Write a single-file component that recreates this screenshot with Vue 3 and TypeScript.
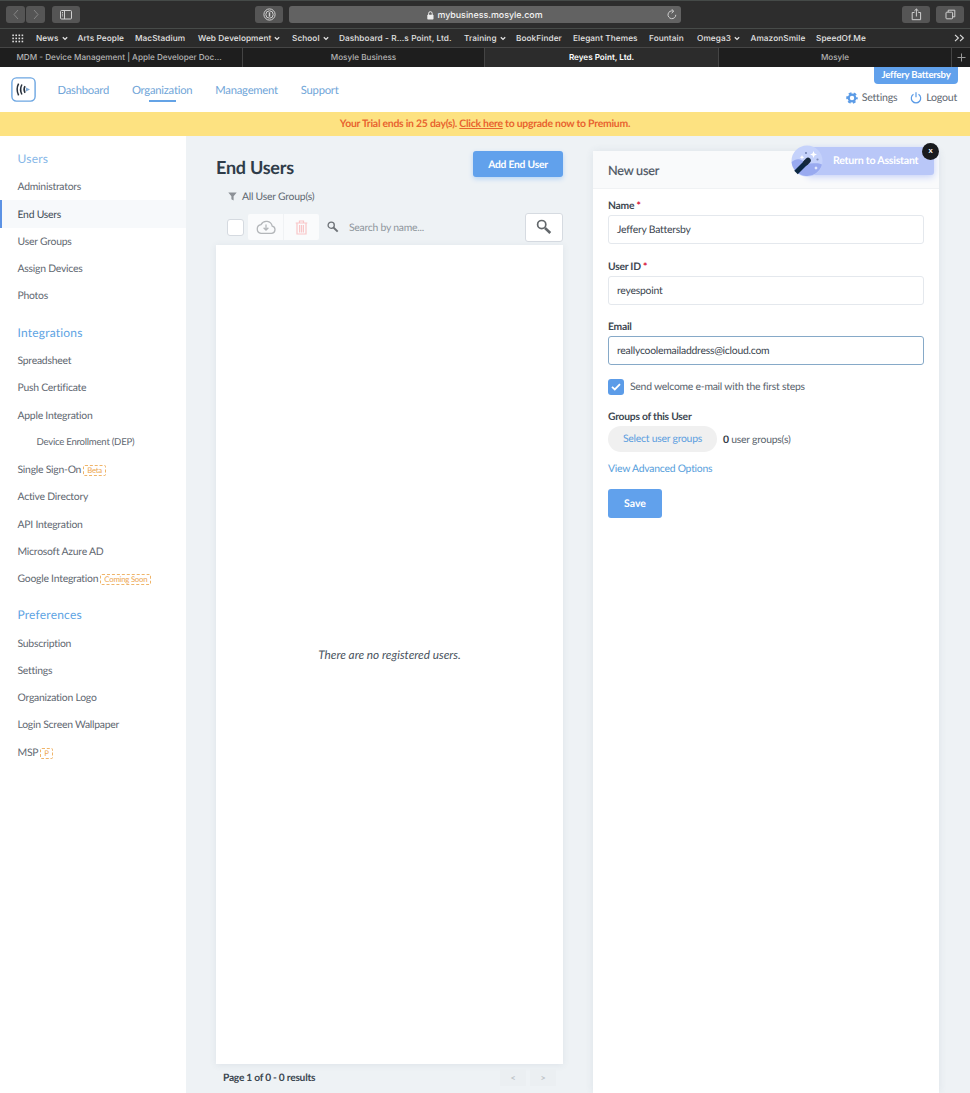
<script setup lang="ts">
interface Bookmark { label: string; menu?: boolean }
interface NavItem { label: string; badge?: string; active?: boolean; nested?: boolean }
interface NavSection { title: string; soft?: boolean; items: NavItem[] }

const bookmarks: Bookmark[] = [
  { label: 'News', menu: true },
  { label: 'Arts People' },
  { label: 'MacStadium' },
  { label: 'Web Development', menu: true },
  { label: 'School', menu: true },
  { label: 'Dashboard - R...s Point, Ltd.' },
  { label: 'Training', menu: true },
  { label: 'BookFinder' },
  { label: 'Elegant Themes' },
  { label: 'Fountain' },
  { label: 'Omega3', menu: true },
  { label: 'AmazonSmile' },
  { label: 'SpeedOf.Me' },
]

const tabs = [
  { label: 'MDM - Device Management | Apple Developer Doc...', active: false },
  { label: 'Mosyle Business', active: false },
  { label: 'Reyes Point, Ltd.', active: true },
  { label: 'Mosyle', active: false },
]

const menu = ['Dashboard', 'Organization', 'Management', 'Support']

const sections: NavSection[] = [
  {
    title: 'Users',
    soft: true,
    items: [
      { label: 'Administrators' },
      { label: 'End Users', active: true },
      { label: 'User Groups' },
      { label: 'Assign Devices' },
      { label: 'Photos' },
    ],
  },
  {
    title: 'Integrations',
    items: [
      { label: 'Spreadsheet' },
      { label: 'Push Certificate' },
      { label: 'Apple Integration' },
      { label: 'Device Enrollment (DEP)', nested: true },
      { label: 'Single Sign-On', badge: 'Beta' },
      { label: 'Active Directory' },
      { label: 'API Integration' },
      { label: 'Microsoft Azure AD' },
      { label: 'Google Integration', badge: 'Coming Soon' },
    ],
  },
  {
    title: 'Preferences',
    items: [
      { label: 'Subscription' },
      { label: 'Settings' },
      { label: 'Organization Logo' },
      { label: 'Login Screen Wallpaper' },
      { label: 'MSP', badge: 'P' },
    ],
  },
]

const fields = [
  { label: 'Name', required: true, value: 'Jeffery Battersby', focused: false },
  { label: 'User ID', required: true, value: 'reyespoint', focused: false },
  { label: 'Email', required: false, value: 'reallycoolemailaddress@icloud.com', focused: true },
]
</script>

<template>
  <div class="window">
    <div class="toolbar">
      <div class="tool nav-back"><svg width="8" height="11" viewBox="0 0 8 11"><path d="M6 1 2 5.5 6 10" /></svg></div>
      <div class="tool nav-forward"><svg width="8" height="11" viewBox="0 0 8 11"><path d="M2 1 6 5.5 2 10" /></svg></div>
      <div class="tool sidebar-toggle">
        <svg width="12" height="10" viewBox="0 0 12 10"><rect x=".5" y=".5" width="11" height="8.5" rx="1" /><path d="M4.5 .5v8.5M2 2.5h1M2 4.2h1M2 5.9h1" /></svg>
      </div>
      <div class="tool password">
        <svg width="13" height="13" viewBox="0 0 13 13"><circle cx="6.5" cy="6.5" r="5.6" /><circle cx="6.5" cy="6.5" r="3.7" /><path d="M6.5 4.3v4.4" stroke-width="1.5" /></svg>
      </div>
      <div class="address">
        <span class="url">
          <svg width="7" height="9" viewBox="0 0 7 9"><rect x=".3" y="3.8" width="6.2" height="4.6" rx=".7" fill="#eee" stroke="none" /><path d="M1.6 4V2.5a1.8 1.8 0 0 1 3.6 0V4" stroke="#eee" /></svg>
          mybusiness.mosyle.com
        </span>
        <svg class="reload" width="10" height="11" viewBox="0 0 10 11"><path d="M6.2 2.1A3.9 3.9 0 1 0 8.8 5.8M4.6 .2 6.8 2.2 4.6 4.2" /></svg>
      </div>
      <div class="tool share">
        <svg width="11" height="13" viewBox="0 0 11 13"><path d="M3.5 4.5H1.2v7.2h8.4V4.5H7.3M5.4 8.5V1M3.3 3 5.4 1l2.1 2" /></svg>
      </div>
      <div class="tool overview">
        <svg width="11" height="11" viewBox="0 0 11 11"><rect x="1" y="3.2" width="6.6" height="6.6" rx=".8" /><path d="M3.2 3V1.2h6.6v6.6H7.8" /></svg>
      </div>
    </div>

    <div class="bookmarks">
      <svg class="apps" width="12" height="9" viewBox="0 0 12 9">
        <g v-for="r in 3" :key="r"><rect v-for="c in 4" :key="c" :x="(c - 1) * 3.1 + 0.3" :y="(r - 1) * 3.1 + 0.5" width="1.6" height="1.6" fill="#ddd" stroke="none" /></g>
      </svg>
      <span v-for="b in bookmarks" :key="b.label" class="bookmark">
        {{ b.label }}<svg v-if="b.menu" width="6" height="5" viewBox="0 0 6 5"><path d="M.8 1.2 3 3.4 5.2 1.2" stroke-width="1.3" /></svg>
      </span>
      <svg class="more" width="11" height="8" viewBox="0 0 11 8"><path d="M1 .8 4.4 4 1 7.2M6 .8 9.4 4 6 7.2" stroke="#ddd" stroke-width="1.1" /></svg>
    </div>

    <div class="tabs">
      <div v-for="t in tabs" :key="t.label" class="tab" :class="{ active: t.active }">{{ t.label }}</div>
      <div class="tab"><svg width="9" height="9" viewBox="0 0 9 9"><path d="M4.5 .5v8M.5 4.5h8" stroke="#999" /></svg></div>
    </div>

    <header class="header">
      <svg class="logo" width="25" height="25" viewBox="0 0 25 25">
        <rect x=".9" y=".9" width="23.2" height="23.2" rx="4.5" fill="#fff" stroke="#6ca6e2" stroke-width="1.4" />
        <path d="M7.6 6.700q-3 5.800 0 11.600M10.900 7.500q-2.600 5 0 10M14 9.200q-1.900 3.300 0 6.600" stroke="#27303c" stroke-width="1.5" />
        <path d="M15 10.400 19 12.500l-4 2.100z" fill="#7fa9d4" stroke="none" />
      </svg>
      <nav class="menu">
        <a v-for="m in menu" :key="m" :class="{ current: m === 'Organization' }">{{ m }}</a>
      </nav>
      <div class="account">
        <div class="who">Jeffery Battersby</div>
        <div class="actions">
          <span class="settings">
            <svg width="12" height="12" viewBox="0 0 12 12"><circle cx="6" cy="6" r="3.3" stroke="#5b9be6" stroke-width="2.2" /><circle cx="6" cy="6" r="4.8" stroke="#5b9be6" stroke-width="1.9" stroke-dasharray="2.800 2.227" stroke-dashoffset="1.4" /></svg>
            Settings
          </span>
          <span class="logout">
            <svg width="12" height="12" viewBox="0 0 12 12"><path d="M3.5 2.2a4.7 4.7 0 1 0 5 0M6 .3v5" stroke="#5b9be6" stroke-width="1.2" /></svg>
            Logout
          </span>
        </div>
      </div>
    </header>

    <div class="banner">Your Trial ends in 25 day(s). <u>Click here</u> to upgrade now to Premium.</div>

    <div class="body">
      <aside class="sidebar">
        <section v-for="s in sections" :key="s.title">
          <h2 :class="{ soft: s.soft }">{{ s.title }}</h2>
          <div v-for="i in s.items" :key="i.label" class="item" :class="{ active: i.active, nested: i.nested }">
            <span>{{ i.label }}</span><span v-if="i.badge" class="badge">{{ i.badge }}</span>
          </div>
        </section>
      </aside>

      <main class="list">
        <div class="list-head">
          <h1>End Users</h1>
          <button class="add">Add End User</button>
        </div>
        <div class="filter">
          <svg width="9" height="9" viewBox="0 0 9 9"><path d="M.3.5h8.400L5.600 4.300v4.200L3.400 7.200V4.300z" fill="#8c9197" stroke="none" /></svg>
          <span>All User Group(s)</span>
        </div>
        <div class="tools">
          <span class="check"></span>
          <div class="bulk">
            <span><svg width="20" height="16" viewBox="0 0 20 16"><path d="M5 14.3h10.300a3.600 3.600 0 0 0 .9-7.100A6 6 0 0 0 5 5.600 4.400 4.400 0 0 0 5 14.300zM10 5.500v5.300M7.600 8.700 10 11l2.400-2.300" stroke="#b3b6b9" stroke-width="1.3" /></svg></span>
            <span><svg width="13" height="15" viewBox="0 0 13 15"><path d="M.7 3h11.600M4.500 2.800V1h4v1.800M2 3v11h9V3M4.600 5v7.500M6.500 5v7.500M8.400 5v7.500" stroke="#f9c6c7" stroke-width="1.2" /></svg></span>
          </div>
          <svg class="glass" width="12" height="12" viewBox="0 0 12 12"><circle cx="4.2" cy="4.2" r="3.1" stroke="#6d7277" stroke-width="1.3" /><path d="M6.7 6.7 10.7 10.6" stroke="#6d7277" stroke-width="2" /></svg>
          <span class="placeholder">Search by name...</span>
          <span class="search"><svg width="16" height="16" viewBox="0 0 16 16"><circle cx="5.7" cy="5.6" r="4.1" stroke="#62676b" stroke-width="1.7" /><path d="M9 9 14.3 14" stroke="#62676b" stroke-width="2.6" /></svg></span>
        </div>
        <div class="empty">There are no registered users.</div>
        <div class="pager">
          <strong>Page 1 of 0 - 0 results</strong>
          <span class="page">&lt;</span>
          <span class="page">&gt;</span>
        </div>
      </main>

      <section class="panel">
        <div class="panel-head">New user</div>
        <div class="form">
          <div v-for="f in fields" :key="f.label" class="field">
            <label>{{ f.label }} <b v-if="f.required">*</b></label>
            <div class="input" :class="{ focused: f.focused }">{{ f.value }}</div>
          </div>
          <div class="welcome">
            <span class="ticked"><svg width="10" height="8" viewBox="0 0 10 8"><path d="M1 3.8 3.8 6.4 9 1.2" stroke="#fff" stroke-width="1.8" /></svg></span>
            Send welcome e-mail with the first steps
          </div>
          <label class="groups-label">Groups of this User</label>
          <div class="groups">
            <span class="pill">Select user groups</span>
            <span class="count"><b>0</b> user groups(s)</span>
          </div>
          <a class="advanced">View Advanced Options</a>
          <button class="save">Save</button>
        </div>
        <div class="assistant">
          <span class="assistant-label">Return to Assistant</span>
          <svg class="wand" width="34" height="34" viewBox="0 0 34 34">
            <circle cx="17" cy="17" r="15.5" fill="#c5d2fb" />
            <path d="M1.600 18a15.500 15.500 0 0 0 30.400 2.500C26 17 19 22 13 17 9 14 5 15 1.600 18z" fill="#99aaf0" />
            <path d="M6 28.500 16.500 18" stroke="#0c2742" stroke-width="5" />
            <path d="M16 18.500 18 16.500" stroke="#16283b" stroke-width="5.5" stroke-linecap="round" />
            <path d="M23.500 7l1 2.500 2.500 1-2.500 1-1 2.500-1-2.500-2.500-1 2.500-1zM12 11l.7 1.600 1.600.7-1.600.7L12 15.600l-.7-1.600-1.600-.7 1.600-.7zM26 22l.6 1.400 1.400.6-1.400.6L26 26l-.6-1.400-1.400-.6 1.400-.6z" fill="#fff" />
            <circle cx="16" cy="9" r=".9" fill="#6678a8" /><circle cx="27.500" cy="15.500" r="1.100" fill="#8090bd" />
          </svg>
          <span class="close">x</span>
        </div>
      </section>
    </div>
  </div>
</template>

<style>
html, body { margin: 0; background: #eef2f5; }
</style>

<style scoped>
* { box-sizing: border-box; }
svg { display: block; flex: none; fill: none; stroke: none; }
.window { width: 970px; height: 1093px; overflow: hidden; font-family: Lato, "Open Sans", sans-serif; font-size: 10.4px; letter-spacing: -.24px; color: #5f6871; text-rendering: geometricPrecision; }

.toolbar { display: flex; align-items: center; height: 28px; padding: 0 6px 0 6px; background: #2d2d2d; border-top: 1px solid #454a48; font-family: Inter, Roboto, sans-serif; letter-spacing: 0; }
.toolbar svg { stroke: #d0d0d0; }
.tool { display: flex; align-items: center; justify-content: center; width: 28px; height: 17px; border-radius: 3px; background: #555; }
.nav-back, .nav-forward { width: 19px; }
.toolbar .nav-back svg, .toolbar .nav-forward svg { stroke: #858585; }
.nav-forward { margin-left: 1px; }
.sidebar-toggle { margin-left: 7px; }
.password { margin-left: 175px; }
.address { position: relative; display: flex; align-items: center; justify-content: center; width: 392px; height: 17px; margin-left: 6px; border-radius: 3px; background: #626262; }
.url { display: flex; align-items: center; gap: 3px; padding-top: 1px; color: #f4f4f4; font-size: 8.9px; font-weight: 500; }
.reload { position: absolute; right: 4px; top: 3px; }
.share { margin-left: 221px; }
.overview { margin-left: 6px; }

.bookmarks { display: grid; grid-template-columns: 24px 41.5px 57.5px 63px 94px 47px 125px 52px 57px 76px 48px 53.5px 65.5px 138px 12px; align-items: center; height: 19px; padding: 0 0 0 12px; background: #2b2b2b; border-top: 1px solid #474b49; font-family: Inter, Roboto, sans-serif; font-size: 8.25px; font-weight: 500; letter-spacing: .08px; color: #e4e4e4; white-space: nowrap; }
.bookmark { display: flex; align-items: center; gap: 3px; }
.bookmark svg { stroke: #e4e4e4; }

.tabs { display: grid; grid-template-columns: 243px 242px 234px 233px 18px; height: 20px; background: #1e1e1e; border-top: 1px solid #464646; font-family: Inter, Roboto, sans-serif; font-size: 8.15px; font-weight: 500; letter-spacing: 0; color: #b4b4b4; white-space: nowrap; }
.tab { display: flex; align-items: center; justify-content: center; padding-bottom: 1px; border-right: 1px solid #444; }
.tab:first-child { padding-right: 4px; }
.tab:last-child { border-right: 0; }
.tab.active { background: #2c2c2c; color: #fff; font-weight: 600; }

.header { display: flex; height: 45px; padding: 0 12px 0 11px; background: #fff; }
.logo { margin-top: 10px; }
.menu { display: flex; gap: 23px; margin: 17px 0 0 21.5px; font-size: 11.25px; line-height: 14px; color: #70a5d8; }
.menu a { display: flex; flex-direction: column; align-items: center; }
.menu .current::after { content: ""; width: 27px; height: 2px; margin-top: 2px; background: #64a3e6; }
.account { display: flex; flex-direction: column; align-items: flex-end; margin-left: auto; }
.who { width: 84px; height: 17px; border-radius: 0 0 4px 4px; background: #61a1ec; color: #fff; font-size: 9.6px; font-weight: 700; line-height: 18px; text-align: center; }
.actions { display: flex; gap: 13px; margin: 7px 1px 0 0; font-size: 10.6px; line-height: 14px; }
.actions > span { display: flex; align-items: center; gap: 4px; }

.banner { height: 24px; background: #fde281; color: #e8642f; font-size: 10.4px; font-weight: 700; line-height: 25px; text-align: center; }

.body { display: grid; grid-template-columns: 186px 407px 346px; height: 957px; background: #eef2f5; }
.sidebar { padding-top: 9px; background: #fff; }
h2 { height: 28px; margin: 0; padding-left: 17.5px; font-size: 12px; font-weight: 400; line-height: 28px; letter-spacing: .2px; color: #5da3e3; }
h2.soft { color: #86b7e8; }
section + section h2 { margin-top: 9.4px; }
.item { display: flex; align-items: center; height: 27.25px; padding: 1.5px 0 0 17.5px; }
.item.active { padding-left: 15.5px; border-left: 2px solid #5c92e4; background: #f7f9fb; color: #424c56; }
.item.nested { padding-left: 36.5px; font-size: 9.6px; }
.badge { height: 11px; margin: 1px 0 0 2px; padding: 0 3px; border: 1px dashed #efb469; border-radius: 2px; color: #eda64f; font-size: 7.8px; line-height: 9px; }

.list { display: flex; flex-direction: column; padding: 15px 30px 0; }
.list-head { display: flex; justify-content: space-between; height: 32px; }
h1 { margin: 5px 0 0; font-size: 18px; line-height: 23px; font-weight: 700; color: #2f3c49; }
.add { width: 90px; height: 26px; border: 0; border-radius: 3px; background: #61a1ec; box-shadow: 0 2px 5px #b7d5f5; color: #fff; font: 700 10.3px Lato, sans-serif; letter-spacing: inherit; padding: 1px 0 0; text-rendering: inherit; }
.filter { display: flex; align-items: center; gap: 5px; height: 26px; padding-left: 12px; }
.filter span { padding-top: 1px; }
.tools { display: flex; align-items: center; height: 36px; padding-left: 11px; }
.check { width: 17px; height: 17px; border: 1px solid #d5dae0; border-radius: 3px; background: #fff; }
.bulk { display: flex; width: 71px; height: 26px; margin-left: 4px; background: #fafbfc; border-radius: 2px; }
.bulk span { display: flex; flex: 1; align-items: center; justify-content: center; }
.bulk span + span { border-left: 1px solid #f0f2f4; }
.glass { margin-left: 8px; }
.placeholder { margin-left: 10px; padding-top: 2px; color: #8f969d; }
.search { display: flex; align-items: center; justify-content: center; width: 38px; height: 29px; margin-left: auto; border: 1px solid #d6dbe1; border-radius: 3px; background: #fff; }
.empty { display: flex; align-items: center; justify-content: center; height: 819px; background: #fff; box-shadow: 0 1px 7px rgba(60, 80, 110, .09); font-size: 11.8px; font-style: italic; letter-spacing: 0; color: #4b5561; }
.pager { display: flex; align-items: center; height: 27px; padding: 0 7px; font-size: 10.2px; color: #3b4650; }
.pager strong { flex: 1; }
.page { width: 26px; height: 17px; margin-left: 4px; background: #ebeff2; color: #bbc1c6; font-size: 9px; font-weight: 700; line-height: 17px; text-align: center; }

.panel { position: relative; margin-top: 15px; background: #fff; box-shadow: 0 0 8px rgba(60, 80, 110, .09); }
.panel-head { height: 38px; padding-left: 15px; border-bottom: 1px solid #f0f2f4; background: #f9fafb; font-size: 12.7px; line-height: 38px; color: #4b545f; -webkit-text-stroke: .2px #4b545f; }
.form { display: flex; flex-direction: column; align-items: flex-start; padding: 9px 15px 0; color: #3c4650; }
.field { width: 100%; height: 60.7px; }
label { display: block; height: 17px; font-size: 10.3px; font-weight: 700; line-height: 16px; color: #3d4751; }
label b { color: #d9203c; }
.input { height: 29px; padding-left: 8px; border: 1px solid #e4e8ed; border-radius: 3px; line-height: 28.5px; }
.input.focused { border-color: #86a9c8; }
.welcome { display: flex; align-items: center; gap: 6px; height: 16px; margin-top: -1px; color: #59636d; }
.ticked { display: flex; align-items: center; justify-content: center; width: 16px; height: 16px; border-radius: 3px; background: #5c9ce8; }
.groups-label { margin-top: 14px; }
.groups { display: flex; align-items: center; height: 26px; }
.pill { width: 109px; height: 26px; border-radius: 13px; background: #f0f0f0; color: #5c9edf; line-height: 27.5px; text-align: center; }
.count { margin-left: 6px; padding-top: 1.5px; color: #59636d; }
.count b { color: #333d47; }
.advanced { height: 14px; margin-top: 10px; color: #58a0dc; line-height: 15.5px; }
.save { width: 54px; height: 29px; margin-top: 13px; padding: 1px 0 0; border: 0; border-radius: 3px; background: #61a1ec; color: #fff; font: 700 10.5px Lato, sans-serif; text-rendering: inherit; }
.assistant { position: absolute; top: -4px; right: 5px; width: 127px; height: 28px; border-radius: 3px; background: #b9c7f8; box-shadow: 0 2px 7px #c6d1f8; }
.assistant-label { display: block; padding-left: 26px; color: #fff; font-size: 10.6px; font-weight: 700; line-height: 29px; white-space: nowrap; }
.wand { position: absolute; left: -17px; top: -3px; }
.close { position: absolute; top: -4px; right: -5px; width: 17px; height: 17px; border-radius: 50%; background: #191b1e; color: #fff; font-size: 8px; font-weight: 700; line-height: 15px; text-align: center; }
</style>
